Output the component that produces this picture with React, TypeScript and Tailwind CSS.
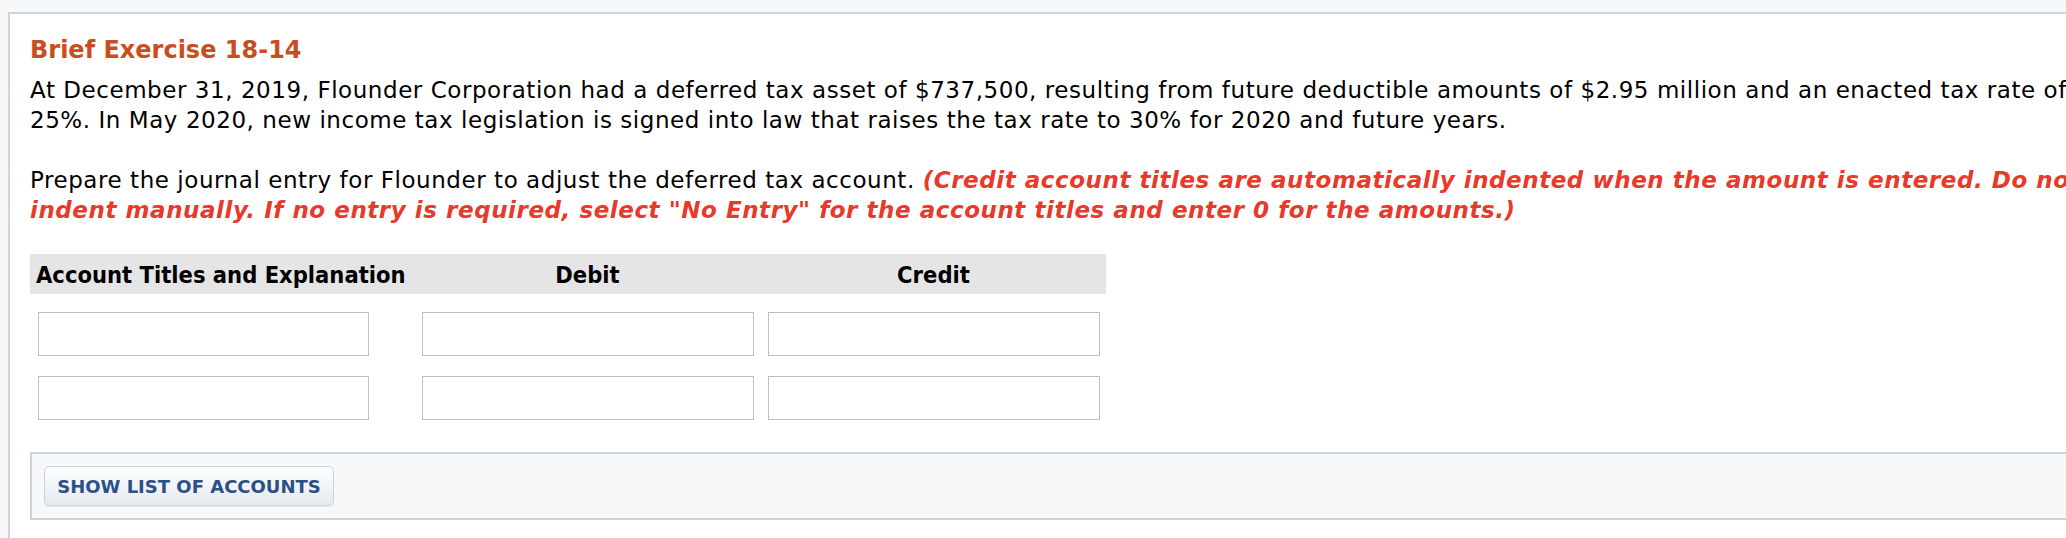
const red = "font-bold italic text-[#e8392b]";

function InputCell({ ml }: { ml: string }) {
  return (
    <input
      type="text"
      className={`${ml} h-[44px] w-[332px] border border-[#bfbfbf] bg-white outline-none`}
    />
  );
}

export default function App() {
  const rows = [0, 1];
  return (
    <div className="h-[538px] w-full overflow-hidden bg-[#f6f7f9] pl-[8px] pt-[12px] font-['DejaVu_Sans',Verdana,sans-serif] text-black">
      <div className="min-h-[600px] w-[2400px] border-2 border-[#cdd4dd] bg-white pl-[20px] pr-[20px] pt-[21px]">
        <h1 className="text-[24px] font-bold leading-[30px] text-[#c84e1f]">Brief Exercise 18-14</h1>

        {/* Problem text */}
        <div className="mt-[10px] text-[23px] leading-[30px] tracking-[0.55px]">
          <p className="whitespace-nowrap">
            At December 31, 2019, Flounder Corporation had a deferred tax asset of $737,500, resulting from future deductible amounts of $2.95 million and an enacted tax rate of
          </p>
          <p className="whitespace-nowrap">
            25%. In May 2020, new income tax legislation is signed into law that raises the tax rate to 30% for 2020 and future years.
          </p>
          <p className="mt-[30px] whitespace-nowrap">
            Prepare the journal entry for Flounder to adjust the deferred tax account.{" "}
            <span className={red}>
              (Credit account titles are automatically indented when the amount is entered. Do not
            </span>
          </p>
          <p className={`whitespace-nowrap ${red}`}>
            indent manually. If no entry is required, select "No Entry" for the account titles and enter 0 for the amounts.)
          </p>
        </div>

        {/* Journal table */}
        <div className="mt-[29px] flex h-[40px] w-[1076px] bg-[#e5e5e5] font-['DejaVu_Sans_Condensed','DejaVu_Sans',sans-serif] text-[23.5px] font-bold leading-[38px]">
          <div className="w-[384px] pl-[6px] pt-[2px]">Account Titles and Explanation</div>
          <div className="w-[347px] pt-[2px] text-center">Debit</div>
          <div className="w-[345px] pt-[2px] text-center">Credit</div>
        </div>
        <div className="mt-[18px] flex flex-col gap-[20px]">
          {rows.map((r) => (
            <div key={r} className="flex">
              <div className="w-[384px]">
                <input
                  type="text"
                  className="ml-[8px] h-[44px] w-[331px] border border-[#bfbfbf] bg-white outline-none"
                />
              </div>
              <div className="w-[347px]">
                <InputCell ml="ml-[8px]" />
              </div>
              <div className="w-[345px]">
                <InputCell ml="ml-[7px]" />
              </div>
            </div>
          ))}
        </div>

        {/* Footer */}
        <div className="mt-[32px] border-2 border-[#cbd3de] bg-[#f7f8fa] p-[12px]">
          <button className="h-[40px] w-[290px] rounded-[5px] border border-[#c9d3df] bg-linear-to-b from-white to-[#e4e9f0] text-[18px] font-bold text-[#2b5086] shadow-[0_1px_1px_rgba(0,0,0,0.06)]">
            SHOW LIST OF ACCOUNTS
          </button>
        </div>
      </div>
    </div>
  );
}
